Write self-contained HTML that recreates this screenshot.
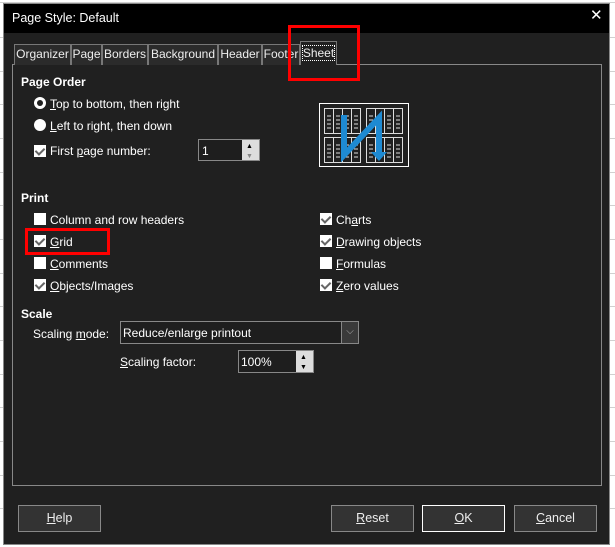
<!DOCTYPE html>
<html><head><meta charset="utf-8"><style>
*{margin:0;padding:0;box-sizing:border-box}
body{width:615px;height:547px;overflow:hidden;background:#fff;position:relative;font-family:"Liberation Sans",sans-serif;font-size:12px;color:#fff}
.a{position:absolute}
.gl{position:absolute;left:0;width:615px;height:1px;background:#d0d0d0}
#dlg{position:absolute;left:3px;top:3px;width:607px;height:542px;background:#202020;border:1px solid #888}
.t{position:absolute;white-space:nowrap;line-height:14px}
.tab{position:absolute;top:44px;height:21px;border:1px solid #777;border-bottom:none;background:#2b2b2b;color:#eee;font-size:12px;line-height:19px;text-align:center;overflow:hidden}
.cb{position:absolute;width:12px;height:12px;background:#fff}
.cb.c::after{content:"";position:absolute;left:3px;top:1px;width:4px;height:7px;border:solid #666;border-width:0 2px 2px 0;transform:rotate(45deg)}
.btn{position:absolute;top:505px;width:83px;height:27px;border:1px solid #888;background:#333;color:#eee;text-align:center;line-height:25px;font-size:12.5px}
u{text-decoration:underline}
b{font-weight:bold}
</style></head><body>
<div class="gl" style="top:2px"></div>
<div class="gl" style="top:37px"></div><div class="gl" style="top:71px"></div><div class="gl" style="top:104px"></div><div class="gl" style="top:138px"></div><div class="gl" style="top:172px"></div><div class="gl" style="top:205px"></div><div class="gl" style="top:239px"></div><div class="gl" style="top:273px"></div><div class="gl" style="top:306px"></div><div class="gl" style="top:340px"></div><div class="gl" style="top:374px"></div><div class="gl" style="top:407px"></div><div class="gl" style="top:441px"></div><div class="gl" style="top:475px"></div><div class="gl" style="top:508px"></div>
<div id="dlg"></div>
<div class="a" style="left:4px;top:4px;width:605px;height:29px;background:#000"></div>
<div class="t" style="left:12px;top:11px;font-size:12.5px">Page Style: Default</div>
<div class="t" style="left:590px;top:9px;font-size:15px">✕</div>
<div class="a" style="left:12px;top:64px;width:590px;height:422px;border:1px solid #888"></div>
<div class="tab" style="left:14px;width:57px">Organizer</div>
<div class="tab" style="left:71px;width:31px">Page</div>
<div class="tab" style="left:102px;width:46px">Borders</div>
<div class="tab" style="left:148px;width:70px">Background</div>
<div class="tab" style="left:218px;width:44px">Header</div>
<div class="tab" style="left:262px;width:38px">Footer</div>
<div class="tab" style="left:300px;top:41px;height:24px;width:37px;background:#202020;line-height:22px"><span style="outline:1px dotted #fff">Sheet</span></div>
<div class="a" style="left:288px;top:25px;width:72px;height:56px;border:3px solid #f00"></div>

<div class="t" style="left:21px;top:75px"><b>Page Order</b></div>
<div class="a" style="left:34px;top:97px;width:12px;height:12px;border-radius:50%;background:#fff"></div>
<div class="a" style="left:37px;top:100px;width:6px;height:6px;border-radius:50%;background:#202020"></div>
<div class="t" style="left:50px;top:97px"><u>T</u>op to bottom, then right</div>
<div class="a" style="left:34px;top:119px;width:12px;height:12px;border-radius:50%;background:#fff"></div>
<div class="t" style="left:50px;top:119px"><u>L</u>eft to right, then down</div>
<div class="cb c" style="left:34px;top:145px"></div>
<div class="t" style="left:50px;top:144px">First <u>p</u>age number:</div>
<div class="a" style="left:198px;top:139px;width:62px;height:22px;border:1px solid #888;background:#1e1e1e"></div>
<div class="t" style="left:202px;top:144px">1</div>
<div class="a" style="left:242px;top:140px;width:17px;height:20px;background:#ddd"></div>
<div class="t" style="left:246px;top:140px;font-size:7px;color:#000">▲</div>
<div class="t" style="left:246px;top:150px;font-size:7px;color:#888">▼</div>

<svg class="a" style="left:319px;top:103px" width="91" height="65" viewBox="0 0 91 65">
<rect x="0.5" y="0.5" width="89" height="63" fill="none" stroke="#fff"/>
<g fill="none" stroke="#ddd">
<rect x="5.5" y="5.5" width="36" height="25"/><rect x="47.5" y="5.5" width="36" height="25"/>
<rect x="5.5" y="34.5" width="36" height="25"/><rect x="47.5" y="34.5" width="36" height="25"/>
<path d="M14.5 5v26M23.5 5v26M32.5 5v26M56.5 5v26M65.5 5v26M74.5 5v26M14.5 34v26M23.5 34v26M32.5 34v26M56.5 34v26M65.5 34v26M74.5 34v26" />
<path d="M8 13h4M17 13h4M26 13h4M35 13h4M50 13h4M59 13h4M68 13h4M77 13h4M8 17h4M17 17h4M26 17h4M35 17h4M50 17h4M59 17h4M68 17h4M77 17h4M8 21h4M17 21h4M26 21h4M35 21h4M50 21h4M59 21h4M68 21h4M77 21h4M8 25h4M17 25h4M26 25h4M35 25h4M50 25h4M59 25h4M68 25h4M77 25h4M8 42h4M17 42h4M26 42h4M35 42h4M50 42h4M59 42h4M68 42h4M77 42h4M8 46h4M17 46h4M26 46h4M35 46h4M50 46h4M59 46h4M68 46h4M77 46h4M8 50h4M17 50h4M26 50h4M35 50h4M50 50h4M59 50h4M68 50h4M77 50h4M8 54h4M17 54h4M26 54h4M35 54h4M50 54h4M59 54h4M68 54h4M77 54h4"/>
</g>
<path d="M25 12V52L60 15V50" fill="none" stroke="#1e8ad2" stroke-width="6" stroke-linejoin="miter"/>
<path d="M52 49h16l-8 9z" fill="#1e8ad2"/>
</svg>

<div class="t" style="left:21px;top:191px"><b>Print</b></div>
<div class="cb" style="left:34px;top:213px"></div><div class="t" style="left:50px;top:213px">Column and row headers</div>
<div class="cb c" style="left:34px;top:235px"></div><div class="t" style="left:50px;top:235px"><u>G</u>rid</div>
<div class="cb" style="left:34px;top:257px"></div><div class="t" style="left:50px;top:257px"><u>C</u>omments</div>
<div class="cb c" style="left:34px;top:279px"></div><div class="t" style="left:50px;top:279px"><u>O</u>bjects/Images</div>
<div class="a" style="left:25px;top:228px;width:85px;height:27px;border:3px solid #f00"></div>
<div class="cb c" style="left:320px;top:213px"></div><div class="t" style="left:336px;top:213px">Ch<u>a</u>rts</div>
<div class="cb c" style="left:320px;top:235px"></div><div class="t" style="left:336px;top:235px"><u>D</u>rawing objects</div>
<div class="cb" style="left:320px;top:257px"></div><div class="t" style="left:336px;top:257px"><u>F</u>ormulas</div>
<div class="cb c" style="left:320px;top:279px"></div><div class="t" style="left:336px;top:279px"><u>Z</u>ero values</div>

<div class="t" style="left:21px;top:307px"><b>Scale</b></div>
<div class="t" style="left:33px;top:327px">Scaling <u>m</u>ode:</div>
<div class="a" style="left:120px;top:321px;width:239px;height:23px;border:1px solid #888;background:#1e1e1e"></div>
<div class="t" style="left:123px;top:326px">Reduce/enlarge printout</div>
<div class="a" style="left:341px;top:322px;width:17px;height:21px;background:#3a3a3a;border-left:1px solid #888;color:#aaa;font-size:10px;text-align:center;line-height:19px">⌵</div>
<div class="t" style="left:120px;top:355px"><u>S</u>caling factor:</div>
<div class="a" style="left:238px;top:350px;width:76px;height:23px;border:1px solid #888;background:#1e1e1e"></div>
<div class="t" style="left:241px;top:355px">100%</div>
<div class="a" style="left:296px;top:351px;width:17px;height:21px;background:#ddd"></div>
<div class="t" style="left:300px;top:351px;font-size:7px;color:#000">▲</div>
<div class="t" style="left:300px;top:361px;font-size:7px;color:#000">▼</div>

<div class="btn" style="left:18px"><u>H</u>elp</div>
<div class="btn" style="left:331px"><u>R</u>eset</div>
<div class="btn" style="left:422px;border-color:#fff"><u>O</u>K</div>
<div class="btn" style="left:514px"><u>C</u>ancel</div>
</body></html>
